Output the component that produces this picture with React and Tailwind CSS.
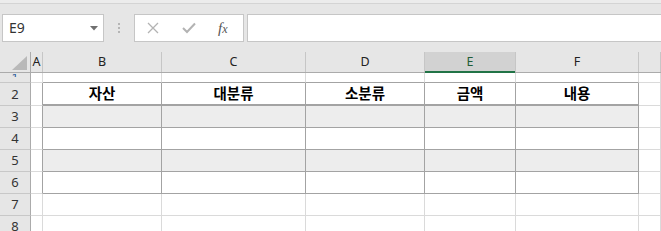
import React from "react";

const cols = ["A", "B", "C", "D", "E", "F", ""];
const labels = ["자산", "대분류", "소분류", "금액", "내용"];
const rows = [1, 2, 3, 4, 5, 6, 7, 8];
const rowH = { 1: "h-[10px]", 2: "h-[23px]", 3: "h-[22px]", 4: "h-[22px]", 5: "h-[22px]", 6: "h-[22px]", 7: "h-[22px]", 8: "h-[22px]" };
const gridCols = "grid grid-cols-[31px_12px_119px_144px_119px_91px_123px_1fr]";

function Cell({ row, col }) {
  // col index 0 = A, 1..5 = B..F, 6 = G
  const inTable = row >= 2 && row <= 6 && col >= 1 && col <= 5;
  const leftOfTable = row >= 2 && row <= 6 && col === 0;
  const aboveTable = row === 1 && col >= 1 && col <= 5;

  let cls = "border-r border-b border-r-[#dadada] border-b-[#dadada] bg-white";
  if (inTable) {
    cls = "border-r border-b border-r-[#a3a3a3] border-b-[#a3a3a3]";
    cls += row === 3 || row === 5 ? " bg-[#ededed]" : " bg-white";
    if (row === 2) cls += " border-b-2 flex items-center justify-center";
  } else if (leftOfTable) {
    cls = "border-r border-b border-r-[#a3a3a3] border-b-[#dadada] bg-white";
  } else if (aboveTable) {
    cls = "border-r border-b border-r-[#dadada] border-b-[#a3a3a3] bg-white";
  }

  return (
    <div className={cls}>
      {row === 2 && col >= 1 && col <= 5 && (
        <span className="text-[14.5px] font-bold leading-none text-black font-['Noto_Sans_CJK_KR',sans-serif]">
          {labels[col - 1]}
        </span>
      )}
    </div>
  );
}

export default function App() {
  return (
    <div className="w-[661px] h-[231px] overflow-hidden bg-[#e6e6e6] font-['Noto_Sans','Open_Sans',sans-serif]">
      {/* top strip */}
      <div className="h-[4px] bg-[#ececec] border-b border-[#d4d4d4]" />

      {/* formula bar */}
      <div className="flex items-stretch h-[28px] mt-[10px] pl-[2px]">
        <div className="w-[102px] bg-white border border-[#c6c6c6] flex items-center justify-between pl-[6px] pr-[5px]">
          <span className="text-[14px] text-[#333] leading-none">E9</span>
          <svg width="8" height="5" viewBox="0 0 8 5">
            <path d="M0 0 H8 L4 4.5 Z" fill="#707070" />
          </svg>
        </div>
        <div className="w-[30px] flex flex-col items-center justify-center gap-[2px]">
          <div className="w-[2px] h-[2px] bg-[#b5b5b5]" />
          <div className="w-[2px] h-[2px] bg-[#b5b5b5]" />
          <div className="w-[2px] h-[2px] bg-[#b5b5b5]" />
        </div>
        <div className="w-[110px] bg-white border border-[#c6c6c6] flex items-center pl-[12px]">
          <svg width="12" height="12" viewBox="0 0 12 12">
            <path d="M1 1 L11 11 M11 1 L1 11" stroke="#b3b3b3" strokeWidth="1.3" />
          </svg>
          <svg width="14" height="12" viewBox="0 0 14 12" className="ml-[23px]">
            <path d="M1 6 L5 10 L13 1.5" stroke="#b3b3b3" strokeWidth="2" fill="none" />
          </svg>
          <span className="ml-[22px] text-[15px] italic text-[#555] font-['Liberation_Serif',serif] leading-none">
            f<span className="text-[12px]">x</span>
          </span>
        </div>
        <div className="flex-1 ml-[3px] bg-white border border-[#c6c6c6] border-r-0" />
      </div>

      {/* column headers */}
      <div className={`${gridCols} h-[21px] mt-[10px] border-b border-[#ababab] bg-[#e6e6e6]`}>
        <div className="border-r border-[#ababab] relative">
          <svg width="15" height="14" viewBox="0 0 15 14" className="absolute right-[3px] bottom-[2px]">
            <path d="M15 0 V14 H0 Z" fill="#b9b9b9" />
          </svg>
        </div>
        {cols.map((c, i) => (
          <div
            key={i}
            className={
              c === "E"
                ? "relative bg-[#d2d2d2] border-r border-[#c6c6c6] flex items-center justify-center text-[12.5px] text-[#1f5c37]"
                : "border-r border-[#c6c6c6] flex items-center justify-center text-[12.5px] text-[#222]"
            }
          >
            {c}
            {c === "E" && <div className="absolute left-0 right-0 -bottom-[1px] h-[2px] bg-[#217346]" />}
          </div>
        ))}
      </div>

      {/* body */}
      {rows.map((r) => (
        <div key={r} className={`${gridCols} ${rowH[r]}`}>
          <div className="bg-[#e6e6e6] border-r border-b border-r-[#ababab] border-b-[#c8c8c8] flex items-center justify-center overflow-hidden">
            {r === 1 ? (
              <div className="h-[3px] self-start mt-[1px] overflow-hidden">
                <span className="block text-[12px] leading-[12px] text-[#2b5797] -mt-[2px]">1</span>
              </div>
            ) : (
              <span className="text-[13px] text-[#333] leading-none">{r}</span>
            )}
          </div>
          {[0, 1, 2, 3, 4, 5, 6].map((c) => (
            <Cell key={c} row={r} col={c} />
          ))}
        </div>
      ))}
    </div>
  );
}
